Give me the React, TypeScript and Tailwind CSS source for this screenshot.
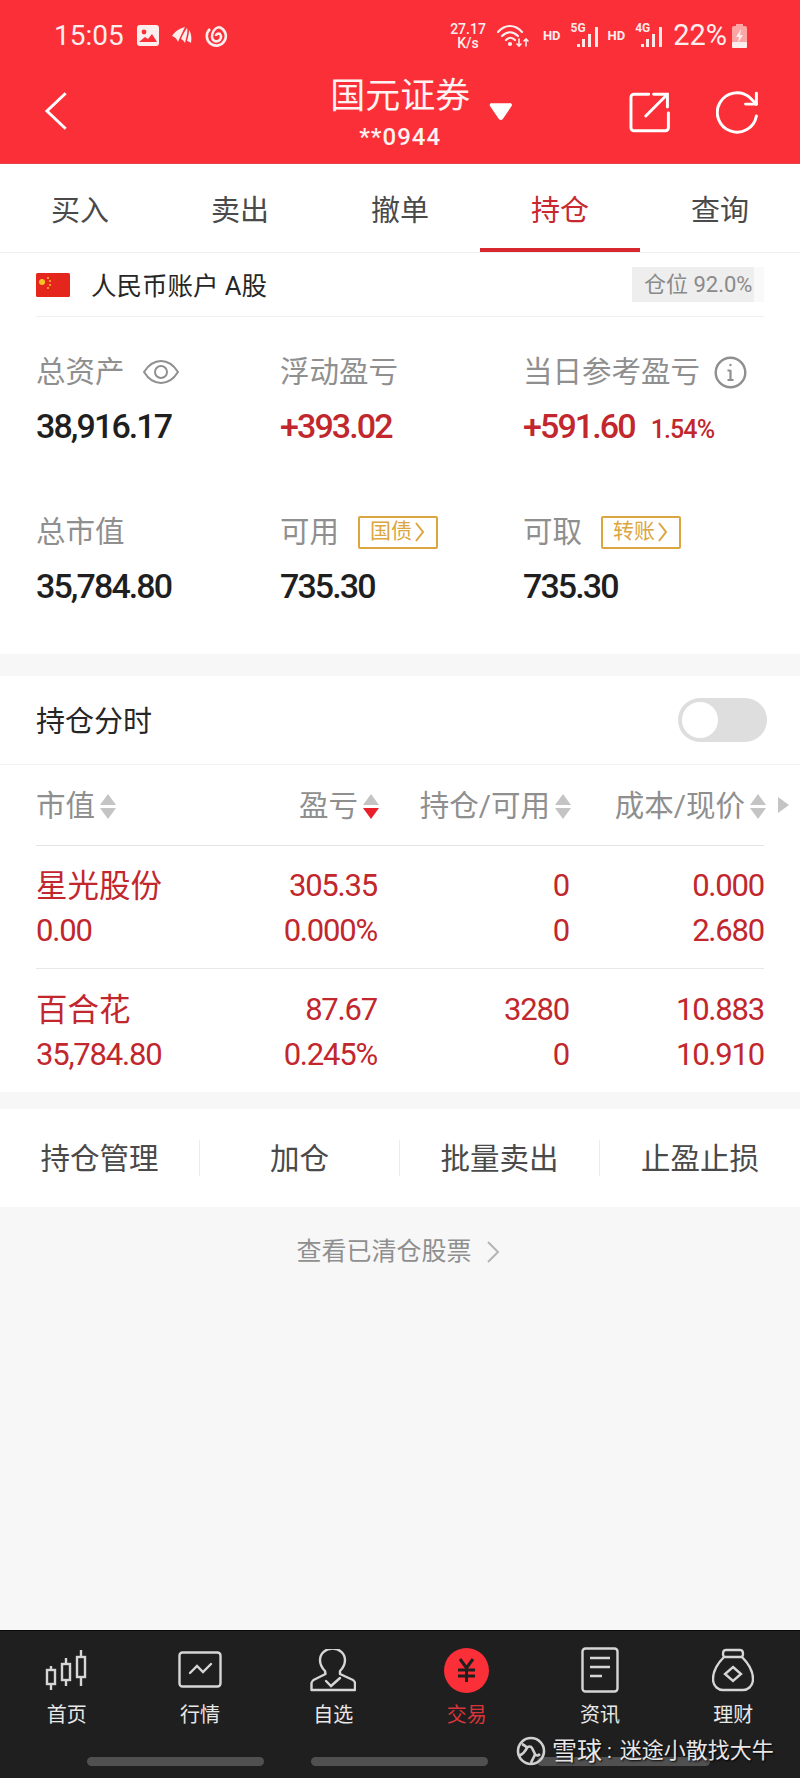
const font = "font-['Roboto','Noto_Sans_CJK_SC',sans-serif]";

function SortArrows({ active }: { active?: boolean }) {
  return (
    <span className="ml-[5px] flex flex-col gap-[3px]">
      <svg width="16" height="11" viewBox="0 0 16 11"><path d="M8 0l8 11H0z" fill="#c4c4c4" /></svg>
      <svg width="16" height="11" viewBox="0 0 16 11"><path d="M8 11L0 0h16z" fill={active ? "#e8202a" : "#c4c4c4"} /></svg>
    </span>
  );
}

function Signal({ label }: { label: string }) {
  return (
    <span className="relative block h-[24px] w-[29px]">
      <span className="absolute left-0 top-[-2px] text-[12px] font-bold leading-[13px] text-[#fde8e8]">{label}</span>
      <svg className="absolute left-0 top-0" width="29" height="24" viewBox="0 0 29 24" fill="#fde8e8">
        <rect x="6" y="20" width="3" height="3" />
        <rect x="11" y="15" width="3" height="8" />
        <rect x="17" y="10" width="3" height="13" />
        <rect x="24" y="3" width="3" height="20" />
      </svg>
    </span>
  );
}

function StatusBar() {
  return (
    <div className="flex h-[70px] items-center pl-[54px] pr-[53px] pt-[1px] text-[#fdeeee]">
      <span className="mr-[13px] text-[28px] leading-none">15:05</span>
      <svg width="22" height="22" viewBox="0 0 22 22" className="mr-[13px]">
        <rect width="22" height="21" rx="3" fill="#fdeeee" />
        <circle cx="7" cy="7" r="2.4" fill="#fb2f37" />
        <path d="M2 17l6-5 3 2 4-5 5 8z" fill="#fb2f37" />
      </svg>
      <svg width="20" height="22" viewBox="0 0 20 22" fill="#fdeeee" className="mr-[13px]">
        <path d="M0 11C4 5 9 3 13 2c-2 4-4 8-7 15-1-3-3-5-6-6z" />
        <path d="M9 14c2-5 4-8 6-11 1 3 0 7-2 15-1-2-2-3-4-4z" />
        <path d="M15 16c1-4 2-7 2-11 2 3 3 7 2 13-1-1-3-2-4-2z" />
      </svg>
      <svg width="23" height="23" viewBox="0 0 23 23" fill="none" stroke="#fdeeee" strokeWidth="2.6">
        <path d="M14 3A9.500 9.500 0 1 1 5 5" />
        <path d="M14 3c-4 1-7 5-7 10a4.500 4.500 0 1 0 8-3c-2-1-4 0-4 2" />
      </svg>
      <span className="ml-auto mr-[11px] flex flex-col items-center text-[14px] font-medium leading-[14px]">
        <span>27.17</span>
        <span>K/s</span>
      </span>
      <svg width="33" height="24" viewBox="0 0 33 24" fill="none" stroke="#fdeeee" strokeWidth="2.2" strokeLinecap="round" className="mr-[13px]">
        <path d="M1 8c7-8 17-8 24 0" />
        <path d="M5 12c5-5 11-5 16 0" />
        <path d="M9 16c3-3 6-3 9 0" />
        <circle cx="13" cy="20" r="1" />
        <path d="M22 15v7M20 20l2 2 2-2M29 22v-7M27 17l2-2 2 2" strokeWidth="1.6" />
      </svg>
      <span className="mr-[10px] text-[13px] font-bold">HD</span>
      <Signal label="5G" />
      <span className="ml-[8px] mr-[10px] text-[13px] font-bold">HD</span>
      <Signal label="4G" />
      <span className="ml-[9px] text-[29px] leading-none">22%</span>
      <svg width="15" height="24" viewBox="0 0 15 24" className="ml-[5px]">
        <rect x="4" y="0" width="7" height="3" fill="#fda4a4" />
        <rect x="0" y="2" width="15" height="22" rx="2" fill="#fda4a4" />
        <rect x="0" y="18" width="15" height="6" rx="1" fill="#fdeeee" />
        <path d="M9 5l-5 8h3l-1 6 5-8H8z" fill="#fdeeee" />
      </svg>
    </div>
  );
}

function Header() {
  return (
    <div className="h-[164px] shrink-0 border-b border-[#e8454b] bg-[#fb2f37]">
      <StatusBar />
      <div className="flex items-start pl-[44px] pr-[41px]">
        <svg width="24" height="40" viewBox="0 0 24 40" fill="none" stroke="#fff" strokeWidth="3" className="mt-[21px]">
          <path d="M22 2L3 20l19 18" />
        </svg>
        <div className="ml-[263px] flex w-[139px] flex-col items-center">
          <span className="whitespace-nowrap pt-[6px] text-[35px] leading-[42px] text-[#fef2f2]">国元证券</span>
          <span className="mt-[4px] whitespace-nowrap text-[24px] font-medium leading-[30px] tracking-[1px] text-[#fef2f2]">**0944</span>
        </div>
        <svg width="24" height="19" viewBox="0 0 24 19" className="ml-[19px] mt-[32px]">
          <path d="M3 1h18a2 2 0 0 1 2 3l-9 13a2.400 2.400 0 0 1-4 0L1 4a2 2 0 0 1 2-3z" fill="#fff" />
        </svg>
        <svg width="42" height="42" viewBox="0 0 42 42" fill="none" stroke="#fff" strokeWidth="3" strokeLinecap="round" className="ml-[117px] mt-[21px]">
          <path d="M20 3H5a3 3 0 0 0-3 3v31a3 3 0 0 0 3 3h32a3 3 0 0 0 3-3V22" />
          <path d="M17 25L38 4M25 3h14v13" />
        </svg>
        <svg width="44" height="44" viewBox="0 0 44 44" fill="none" stroke="#fff" strokeWidth="3" strokeLinecap="round" className="ml-[45px] mt-[20px]">
          <path d="M41 26A20 20 0 1 1 34 7l7 7" />
          <path d="M41 3v11H30" strokeLinejoin="round" />
        </svg>
      </div>
    </div>
  );
}

function Tabs() {
  const tabs = ["买入", "卖出", "撤单", "持仓", "查询"];
  return (
    <div className="grid h-[89px] shrink-0 grid-cols-5 border-b border-[#eeeeee]">
      {tabs.map((t) => (
        <div
          key={t}
          className={
            t === "持仓"
              ? "flex items-center justify-center border-b-[4px] border-[#d8282f] pt-[12px] text-[29px] text-[#c8282e]"
              : "flex items-center justify-center pt-[8px] text-[29px] text-[#4a4a4a]"
          }
        >
          {t}
        </div>
      ))}
    </div>
  );
}

function AccountRow() {
  return (
    <div className="mx-[36px] flex h-[64px] shrink-0 items-center border-b border-[#f0f0f0]">
      <svg width="34" height="24" viewBox="0 0 34 24">
        <rect width="34" height="24" rx="1.500" fill="#e5261c" />
        <circle cx="6" cy="9" r="3" fill="#f7c325" />
        <circle cx="12" cy="5" r="1" fill="#f7c325" />
        <circle cx="14" cy="8" r="1" fill="#f7c325" />
        <circle cx="14" cy="12" r="1" fill="#f7c325" />
        <circle cx="12" cy="15" r="1" fill="#f7c325" />
      </svg>
      <span className="ml-[21px] pt-[4px] text-[25.5px] text-[#262626]">人民币账户 A股</span>
      <span className="ml-auto flex h-[35px] w-[132px] items-center border-r-[10px] border-r-[#f9f9f9] bg-[#eeeeee] pl-[12px] text-[22px] text-[#8a8a8a]">
        仓位 92.0%
      </span>
    </div>
  );
}

function LinkTag({ text }: { text: string }) {
  return (
    <span className="ml-[19px] flex h-[33px] w-[80px] items-center rounded-[2px] border-2 border-[#dba63f] pl-[10px] text-[21px] text-[#dba63f]">
      {text}
      <svg width="11" height="22" viewBox="0 0 11 22" fill="none" stroke="#dba63f" strokeWidth="2" className="ml-[2px]">
        <path d="M2 2l7 9-7 9" />
      </svg>
    </span>
  );
}

function Stat({ label, extra, value, red, sub }: { label: string; extra?: React.ReactNode; value: string; red?: boolean; sub?: string }) {
  return (
    <div>
      <div className="flex h-[40px] items-center text-[29.5px] text-[#8f8f8f]">
        {label}
        {extra}
      </div>
      <div className={red ? "mt-[14px] flex h-[40px] items-baseline text-[#c1272d]" : "mt-[14px] flex h-[40px] items-baseline text-[#1f1f1f]"}>
        <span className="text-[34px] font-medium leading-[40px] tracking-[-1.9px]">{value}</span>
        {sub && <span className="ml-[16px] text-[25px] font-medium tracking-[-0.9px]">{sub}</span>}
      </div>
    </div>
  );
}

function Stats() {
  return (
    <div className="grid h-[335px] shrink-0 grid-cols-[244px_243px_1fr] content-start gap-y-[66px] pl-[36px] pt-[35px]">
      <Stat
        label="总资产"
        value="38,916.17"
        extra={
          <svg width="36" height="26" viewBox="0 0 36 26" fill="none" stroke="#8f8f8f" strokeWidth="2" className="ml-[18px]">
            <path d="M1 13C6 5 12 2 18 2s12 3 17 11c-5 8-11 11-17 11S6 21 1 13z" />
            <circle cx="18" cy="13" r="6" />
          </svg>
        }
      />
      <Stat label="浮动盈亏" value="+393.02" red />
      <Stat
        label="当日参考盈亏"
        value="+591.60"
        red
        sub="1.54%"
        extra={
          <svg width="33" height="33" viewBox="0 0 33 33" fill="none" stroke="#8f8f8f" strokeWidth="2.4" className="ml-[14px]">
            <circle cx="16.500" cy="16.500" r="14.800" />
            <path d="M16.500 14v10M13.500 14.500h3M13.500 24h6" strokeWidth="2.2" />
            <circle cx="16.500" cy="9" r="1.200" fill="#8f8f8f" stroke="none" />
          </svg>
        }
      />
      <Stat label="总市值" value="35,784.80" />
      <Stat label="可用" value="735.30" extra={<LinkTag text="国债" />} />
      <Stat label="可取" value="735.30" extra={<LinkTag text="转账" />} />
    </div>
  );
}

function ToggleRow() {
  return (
    <div className="flex h-[89px] shrink-0 items-center justify-between border-b border-[#f2f2f2] pl-[36px] pr-[33px] text-[29px] text-[#262626]">
      <span className="pt-[6px]">持仓分时</span>
      <span className="flex h-[44px] w-[89px] items-center rounded-full bg-[#dedede] pl-[4px]">
        <span className="h-[36px] w-[36px] rounded-full bg-white" />
      </span>
    </div>
  );
}

const tableCols = "grid grid-cols-[181px_160px_192px_195px]";

function HoldingsHead() {
  return (
    <div className="relative shrink-0">
      <div className={`mx-[36px] h-[81px] items-center border-b border-[#e4e4e4] pt-[3px] text-[29.5px] text-[#8f8f8f] ${tableCols}`}>
        <span className="flex items-center">市值<SortArrows /></span>
        <span className="mr-[-2px] flex items-center justify-end">盈亏<SortArrows active /></span>
        <span className="mr-[-2px] flex items-center justify-end whitespace-nowrap">持仓/可用<SortArrows /></span>
        <span className="mr-[-2px] flex items-center justify-end whitespace-nowrap">成本/现价<SortArrows /></span>
      </div>
      <svg width="11" height="16" viewBox="0 0 11 16" className="absolute left-[778px] top-[32px]">
        <path d="M0 0l11 8-11 8z" fill="#c4c4c4" />
      </svg>
    </div>
  );
}

function HoldingRow({ cells, last }: { cells: string[]; last?: boolean }) {
  return (
    <div className={last ? `mx-[36px] h-[123px] content-start gap-y-[2px] pt-[20px] text-[31px] leading-[42px] tracking-[-1.2px] text-[#c1272d] ${tableCols}` : `mx-[36px] h-[123px] content-start gap-y-[2px] border-b border-[#e8e8e8] pt-[19px] text-[31px] leading-[42px] tracking-[-1.2px] text-[#c1272d] ${tableCols}`}>
      {cells.map((c, i) => (
        <span key={i} className={i === 0 ? "whitespace-nowrap pt-[1px] text-[31.5px] tracking-normal" : i % 4 === 0 ? "whitespace-nowrap" : "text-right"}>
          {c}
        </span>
      ))}
    </div>
  );
}

function Actions() {
  const items = ["持仓管理", "加仓", "批量卖出", "止盈止损"];
  return (
    <div className="grid h-[98px] shrink-0 grid-cols-4 items-center bg-white">
      {items.map((t, i) => (
        <span key={t} className={i < 3 ? "flex h-[36px] items-center justify-center border-r border-[#ececec] pt-[2px] text-[29.5px] text-[#4a4a4a]" : "flex h-[36px] items-center justify-center pt-[2px] text-[29.5px] text-[#4a4a4a]"}>
          {t}
        </span>
      ))}
    </div>
  );
}

function NavIcon({ name }: { name: string }) {
  const p = { fill: "none", stroke: "#d6d6d6", strokeWidth: 2.4 };
  if (name === "首页")
    return (
      <svg width="44" height="40" viewBox="0 0 44 40" {...p}>
        <path d="M6 16v24M21 8v28M36 0v36" />
        <rect x="2" y="20" width="8" height="14" fill="#1f1f1f" />
        <rect x="17" y="14" width="8" height="16" fill="#1f1f1f" />
        <rect x="32" y="7" width="8" height="20" fill="#1f1f1f" />
      </svg>
    );
  if (name === "行情")
    return (
      <svg width="44" height="38" viewBox="0 0 44 38" {...p}>
        <rect x="1.500" y="1.500" width="41" height="34" rx="3" />
        <path d="M12 22l7-7 6 6 8-8" strokeLinecap="round" />
      </svg>
    );
  if (name === "自选")
    return (
      <svg width="46" height="43" viewBox="0 0 46 43" {...p}>
        <path d="M15 22c-3-3-5-7-5-11a12 11 0 0 1 25 0c0 4-2 8-5 11v3l13 6c1 1 2 2 2 3v7H1.500v-7c0-1 1-2 2-3l12-6z" strokeLinejoin="round" />
        <path d="M16 32l5 5 9-8" strokeLinecap="round" />
      </svg>
    );
  if (name === "交易")
    return (
      <svg width="45" height="45" viewBox="0 0 45 45">
        <circle cx="22.500" cy="22.500" r="22.500" fill="#fb2f37" />
        <path d="M16 11l6.500 9 6.500-9M14 22h17M14 28h17M22.500 20v14" fill="none" stroke="#1f1f1f" strokeWidth="3" />
      </svg>
    );
  if (name === "资讯")
    return (
      <svg width="38" height="46" viewBox="0 0 38 46" {...p}>
        <rect x="1.500" y="1.500" width="35" height="43" rx="3" />
        <path d="M9 11h20M9 20h20M9 29h12" />
      </svg>
    );
  return (
    <svg width="42" height="44" viewBox="0 0 42 44" {...p}>
      <path d="M12 9c-2-3-1-7 2-7h14c3 0 4 4 2 7" strokeLinejoin="round" />
      <path d="M12 9h18c5 5 11 13 11 22 0 8-6 11-10 11H11C7 42 1 39 1 31 1 22 7 14 12 9z" />
      <path d="M21 19l8 7-8 7-8-7z" />
    </svg>
  );
}

function BottomNav() {
  const items = ["首页", "行情", "自选", "交易", "资讯", "理财"];
  return (
    <div className="relative h-[148px] shrink-0 border-t border-[#0a0a0a] bg-[#1f1f1f]">
      <div className="grid h-[103px] grid-cols-6">
        {items.map((n) => (
          <div key={n} className="flex flex-col items-center">
            <span className="flex h-[70px] items-center justify-center pt-[8px]">
              <NavIcon name={n} />
            </span>
            <span className={n === "交易" ? "text-[20px] leading-[28px] text-[#d9343a]" : "text-[20px] leading-[28px] text-[#e8e8e8]"}>{n}</span>
          </div>
        ))}
      </div>
      <div className="ml-[87px] mt-[23px] flex gap-[47px]">
        <span className="h-[9px] w-[177px] rounded-full bg-[#505050]" />
        <span className="h-[9px] w-[177px] rounded-full bg-[#505050]" />
        <span className="ml-[2px] h-[9px] w-[173px] rounded-full bg-[#505050]" />
      </div>
      {/* 雪球 watermark sits over the bottom bar */}
      <div className="absolute left-[516px] top-[105px] flex items-center text-[#e6e6e6] [text-shadow:1px_1px_2px_#000]">
        <svg width="30" height="30" viewBox="0 0 30 30" fill="none" stroke="#d0d0d0" strokeWidth="2.6">
          <circle cx="15" cy="15" r="13" />
          <path d="M3 20c4-2 6-4 8-8 1-2 4-2 5 0l3 6c1 2 3 2 5 0M6 8c2 1 4 2 5 4M15 27c1-3 3-5 4-9" />
        </svg>
        <span className="ml-[6px] text-[25px] leading-none">雪球</span>
        <span className="ml-[5px] mr-[8px] text-[20px] leading-none">:</span>
        <span className="text-[22px] leading-none">迷途小散找大牛</span>
      </div>
    </div>
  );
}

export default function App() {
  return (
    <div className={`flex h-[1778px] w-[800px] flex-col overflow-hidden bg-[#f7f7f7] ${font}`}>
      <Header />
      <div className="flex h-[490px] shrink-0 flex-col bg-white">
        <Tabs />
        <AccountRow />
        <Stats />
      </div>
      <div className="mt-[22px] shrink-0 bg-white">
        <ToggleRow />
        <HoldingsHead />
        <HoldingRow cells={["星光股份", "305.35", "0", "0.000", "0.00", "0.000%", "0", "2.680"]} />
        <HoldingRow last cells={["百合花", "87.67", "3280", "10.883", "35,784.80", "0.245%", "0", "10.910"]} />
      </div>
      <div className="mt-[17px] shrink-0">
        <Actions />
      </div>
      <div className="flex flex-1 items-start justify-center pr-[4px] pt-[26px] text-[25px] text-[#8f8f8f]">
        <span className="flex items-center">
          查看已清仓股票
          <svg width="14" height="24" viewBox="0 0 14 24" fill="none" stroke="#b5b5b5" strokeWidth="2" className="ml-[14px]">
            <path d="M2 2l10 10L2 22" />
          </svg>
        </span>
      </div>
      <BottomNav />
    </div>
  );
}
